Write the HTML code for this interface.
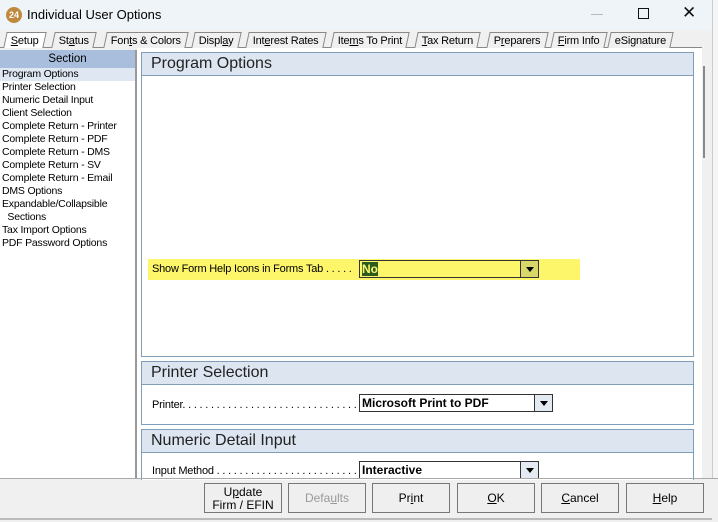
<html><head><style>
body{margin:0;width:718px;height:522px;overflow:hidden;background:#f0f0f0;font-family:"Liberation Sans",sans-serif;position:relative}
.a{position:absolute}
.title{left:0;top:0;width:718px;height:30px;background:#eff4f9}
.tab{position:absolute;top:32px;height:15px;font-size:11px;line-height:16px;color:#000;border:1px solid #888;border-bottom:none;padding:0 5px;background:#f0f0f0;transform:skewX(-12deg);letter-spacing:-0.2px}
.tab span{display:inline-block;transform:skewX(12deg)}
.left{left:0;top:50px;width:135px;height:428px;background:#fff;border-right:2px solid #999}
.left .h{background:#a9bedc;height:18px;text-align:center;font-size:11.5px;line-height:18px}
.left div.i{font-size:10.5px;line-height:13px;padding-left:2px;color:#000;letter-spacing:-0.2px}
.box{position:absolute;left:141px;width:551px;border:1px solid #7f9db9;background:#fff}
.hd{background:#dce5f0;border-bottom:1px solid #7f9db9;height:22px;font-size:16px;line-height:22px;padding-left:9px;color:#222}
.lbl{position:absolute;left:10px;font-size:11px;color:#000;letter-spacing:-0.2px}
.dd{position:absolute;left:217px;border:1px solid #333;background:#fff;font-size:12px;font-weight:bold;line-height:16px;height:16px;padding-left:2px}
.arr{position:absolute;right:0;top:0;width:17px;height:16px;border-left:1px solid #333;background:#e4eaf2}
.arr:after{content:"";position:absolute;left:5px;top:6px;border:4px solid transparent;border-top:5px solid #000;border-bottom:0}
.btn{position:absolute;top:483px;width:76px;height:28px;border:1px solid #777;background:#efefef;font-size:12px;text-align:center;line-height:28px}
.btn.two{line-height:13px;height:26px;padding-top:2px}
u{text-decoration:underline}
</style></head><body>
<div class="a title"></div>
<div class="a" style="left:6px;top:7px;width:16px;height:16px;border-radius:50%;background:#c08a3e;color:#fff;font-size:9px;font-weight:bold;text-align:center;line-height:16px">24</div>
<div class="a" style="left:27px;top:7px;font-size:13px;color:#000">Individual User Options</div>
<div class="a" style="left:591px;top:14px;width:12px;height:1px;background:#bbb"></div>
<div class="a" style="left:638px;top:8px;width:9px;height:9px;border:1px solid #111"></div>
<div class="a" style="left:682px;top:3px;font-size:17px;color:#111">✕</div>
<div class="a" style="left:0;top:47px;width:702px;height:1px;background:#888"></div>
<div class="tab" style="left:5px;background:#fff"><span><u>S</u>etup</span></div>
<div class="tab" style="left:53px"><span>St<u>a</u>tus</span></div>
<div class="tab" style="left:105px"><span>Fon<u>t</u>s &amp; Colors</span></div>
<div class="tab" style="left:193px"><span>Displ<u>a</u>y</span></div>
<div class="tab" style="left:247px"><span>Int<u>e</u>rest Rates</span></div>
<div class="tab" style="left:332px"><span>Ite<u>m</u>s To Print</span></div>
<div class="tab" style="left:416px"><span><u>T</u>ax Return</span></div>
<div class="tab" style="left:488px"><span>P<u>r</u>eparers</span></div>
<div class="tab" style="left:552px"><span><u>F</u>irm Info</span></div>
<div class="tab" style="left:609px"><span>eSignature</span></div>
<div class="a left"><div class="h">Section</div>
<div class="i" style="background:#dfe7f2">Program Options</div><div class="i">Printer Selection</div><div class="i">Numeric Detail Input</div><div class="i">Client Selection</div><div class="i">Complete Return - Printer</div><div class="i">Complete Return - PDF</div><div class="i">Complete Return - DMS</div><div class="i">Complete Return - SV</div><div class="i">Complete Return - Email</div><div class="i">DMS Options</div><div class="i">Expandable/Collapsible</div><div class="i">&nbsp;&nbsp;Sections</div><div class="i">Tax Import Options</div><div class="i">PDF Password Options</div></div>
<div class="a" style="left:137px;top:48px;width:565px;height:430px;background:#fff"></div>
<div class="a" style="left:702px;top:48px;width:10px;height:430px;background:#f0f0f0"></div>
<div class="a" style="left:703px;top:66px;width:2px;height:92px;background:#888"></div>
<div class="a" style="left:712px;top:0;width:6px;height:478px;background:#f5f5f5;border-left:1px solid #ccc"></div>
<div class="box" style="top:52px;height:303px"><div class="hd">Program Options</div>
<div class="a" style="left:6px;top:206px;width:432px;height:21px;background:#fdf66a"></div>
<div class="lbl" style="top:210px">Show Form Help Icons in Forms Tab . . . . .</div>
<div class="dd" style="top:207px;width:176px;background:#fdf66a"><span style="background:#2d5d1e;color:#fdf66a">No</span><div class="arr" style="background:#d8d86a"></div></div>
</div>
<div class="box" style="top:361px;height:62px"><div class="hd">Printer Selection</div>
<div class="lbl" style="top:37px">Printer. . . . . . . . . . . . . . . . . . . . . . . . . . . . . . .</div>
<div class="dd" style="top:32px;width:190px">Microsoft Print to PDF<div class="arr"></div></div></div>
<div class="box" style="top:429px;height:50px;border-bottom:none"><div class="hd">Numeric Detail Input</div>
<div class="lbl" style="top:35px">Input Method . . . . . . . . . . . . . . . . . . . . . . . . . .</div>
<div class="dd" style="top:31px;width:176px">Interactive<div class="arr"></div></div></div>
<div class="a" style="left:0;top:478px;width:718px;height:1px;background:#aaa"></div>
<div class="a" style="left:0;top:518px;width:712px;height:2px;background:#bbb"></div>
<div class="btn two" style="left:204px">U<u>p</u>date<br>Firm / EFIN</div>
<div class="btn" style="left:288px;color:#999">Defa<u>u</u>lts</div>
<div class="btn" style="left:372px">Pr<u>i</u>nt</div>
<div class="btn" style="left:457px"><u>O</u>K</div>
<div class="btn" style="left:541px"><u>C</u>ancel</div>
<div class="btn" style="left:626px"><u>H</u>elp</div>
</body></html>
